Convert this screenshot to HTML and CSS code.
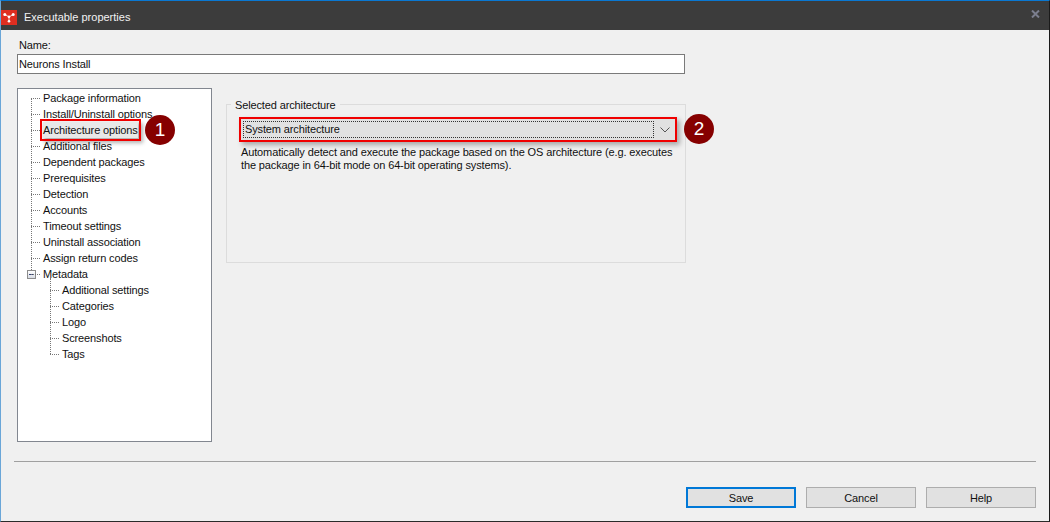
FILE: index.html
```html
<!DOCTYPE html>
<html lang="en">
<head>
<meta charset="utf-8">
<title>Executable properties</title>
<link rel="stylesheet" href="styles.css">
</head>
<body>
<div class="window">
  <header class="titlebar">
    <span class="app-icon">
      <svg width="16" height="15" viewBox="0 0 16 15"><path d="M4 4.500L8 7l4-2.500M8 7v4" stroke="#fff" stroke-width=".8" fill="none"/><circle cx="3.800" cy="4.500" r="1.500" fill="#fff"/><circle cx="12.200" cy="4.500" r="1.500" fill="#fff"/><circle cx="8" cy="6.800" r="1.300" fill="#fff"/><circle cx="8" cy="11.200" r="1.300" fill="#fff"/></svg>
    </span>
    <span class="title">Executable properties</span>
    <svg class="close" width="9" height="8" viewBox="0 0 9 8"><path d="M1 .5l7 7M8 .5l-7 7" stroke="#7b7e8e" stroke-width="2"/></svg>
  </header>
  <main class="content">
    <label class="name-label">Name:</label>
    <div class="name-input">Neurons Install</div>
    <div class="columns">
      <nav class="tree">
        <ul class="branch root">
          <li class="node"><i class="tick"></i><span>Package information</span></li>
          <li class="node"><i class="tick"></i><span>Install/Uninstall options</span></li>
          <li class="node"><i class="tick"></i><span class="marked">Architecture options</span><b class="badge badge-one">1</b></li>
          <li class="node"><i class="tick"></i><span>Additional files</span></li>
          <li class="node"><i class="tick"></i><span>Dependent packages</span></li>
          <li class="node"><i class="tick"></i><span>Prerequisites</span></li>
          <li class="node"><i class="tick"></i><span>Detection</span></li>
          <li class="node"><i class="tick"></i><span>Accounts</span></li>
          <li class="node"><i class="tick"></i><span>Timeout settings</span></li>
          <li class="node"><i class="tick"></i><span>Uninstall association</span></li>
          <li class="node"><i class="tick"></i><span>Assign return codes</span></li>
        </ul>
        <div class="node parent"><i class="expander"></i><i class="tick"></i><span>Metadata</span></div>
        <ul class="branch sub">
          <li class="node"><i class="tick"></i><span>Additional settings</span></li>
          <li class="node"><i class="tick"></i><span>Categories</span></li>
          <li class="node"><i class="tick"></i><span>Logo</span></li>
          <li class="node"><i class="tick"></i><span>Screenshots</span></li>
          <li class="node"><i class="tick"></i><span>Tags</span></li>
        </ul>
      </nav>
      <section class="group">
        <span class="legend">Selected architecture</span>
        <div class="combo">
          <span class="combo-value"><span>System architecture</span></span>
          <svg class="chevron" width="10" height="6" viewBox="0 0 10 6"><path d="M.5.5L5 5 9.500.5" stroke="#555" fill="none"/></svg>
          <b class="badge badge-two">2</b>
        </div>
        <p class="help">Automatically detect and execute the package based on the OS architecture (e.g. executes the package in 64-bit mode on 64-bit operating systems).</p>
      </section>
    </div>
    <div class="footer">
      <button class="btn primary">Save</button>
      <button class="btn">Cancel</button>
      <button class="btn">Help</button>
    </div>
  </main>
</div>
</body>
</html>
```
FILE: styles.css
```css
* { box-sizing: border-box; }
html, body { margin: 0; padding: 0; }
body {
  width: 1050px;
  height: 522px;
  overflow: hidden;
  font-family: "Liberation Sans", Arial, sans-serif;
  font-size: 11px;
  letter-spacing: -.13px;
  color: #111;
  background: #f0f0f0;
}
.window {
  width: 1050px;
  height: 522px;
  display: flex;
  flex-direction: column;
  border-top: 1px solid #0a78d2;
  border-left: 1px solid #6aa6d8;
  border-right: 1px solid #1a1a1a;
  border-bottom: 1px solid #2a2a2a;
}
.titlebar {
  height: 29px;
  flex: none;
  display: flex;
  align-items: center;
  background: #3c3c3c;
  color: #f2f2f2;
  padding-right: 9px;
  padding-top: 3px;
}
.app-icon {
  width: 16px;
  height: 15px;
  background: #df2e20;
  display: flex;
}
.title { margin-left: 7px; flex: 1; letter-spacing: 0; }
.close { margin-top: -6px; }
.content {
  flex: 1;
  display: flex;
  flex-direction: column;
  padding: 8px 13px 0 16px;
}
.name-label { height: 16px; margin-left: 2px; line-height: 15px; }
.name-input {
  width: 668px;
  height: 20px;
  background: #fff;
  border: 1px solid #7a7a7a;
  line-height: 18px;
  padding-left: 1px;
}
.columns { display: flex; margin-top: 14px; height: 354px; }
.tree {
  width: 195px;
  height: 354px;
  background: #fff;
  border: 1px solid #828790;
  padding-top: 1px;
}
.branch { list-style: none; margin: 0; padding: 0; position: relative; }
.branch::before {
  content: "";
  position: absolute;
  border-left: 1px dotted #777;
  top: 8px;
}
.root { padding-left: 25px; }
.root::before { left: 13px; bottom: -4px; }
.sub { padding-left: 44px; }
.sub::before { left: 32px; top: -4px; bottom: 8px; }
.node {
  height: 16px;
  line-height: 16px;
  display: flex;
  align-items: center;
  white-space: nowrap;
  position: relative;
}
.tick {
  position: absolute;
  margin-left: -12px;
  width: 9px;
  border-top: 1px dotted #777;
}
.parent { padding-left: 25px; }
.expander {
  position: absolute;
  left: 9px;
  top: 4px;
  width: 9px;
  height: 9px;
  border: 1px solid #8c8c8c;
  background: linear-gradient(#fff, #d8dce4);
}
.expander::after {
  content: "";
  position: absolute;
  left: 1px;
  top: 3px;
  width: 5px;
  height: 1px;
  background: #33427a;
}
.marked {
  outline: 2px solid #f00000;
  outline-offset: 1px;
  box-shadow: 3px 3px 4px 2px rgba(0, 0, 0, .3);
  background: #e8e8e8;
}
.badge {
  position: absolute;
  width: 30px;
  height: 30px;
  border-radius: 50%;
  background: #860000;
  color: #fff;
  font-size: 19px;
  font-weight: 400;
  line-height: 30px;
  text-align: center;
}
.badge-one { left: 102px; top: -7px; }
.badge-two { left: 443px; top: -5px; }
.group {
  width: 460px;
  height: 159px;
  margin: 16px 0 0 14px;
  border: 1px solid #dcdcdc;
  padding: 14px 10px 0 14px;
  position: relative;
}
.legend {
  position: absolute;
  left: 4px;
  top: -7px;
  padding: 0 4px;
  background: #f0f0f0;
  line-height: 14px;
}
.combo {
  width: 434px;
  height: 21px;
  background: #e1e1e1;
  display: flex;
  align-items: center;
  position: relative;
  outline: 2px solid #f00000;
  outline-offset: 0;
  box-shadow: 3px 3px 5px 2px rgba(0, 0, 0, .3);
  padding: 2px 21px 2px 2px;
}
.combo-value {
  flex: 1;
  height: 100%;
  border: 1px dotted #333;
  line-height: 15px;
  padding-left: 1px;
}
.chevron { position: absolute; right: 5px; top: 8px; }
.help { margin: 6px 0 0; line-height: 13px; width: 440px; }
.footer {
  margin-top: 19px;
  border-top: 1px solid #a0a0a0;
  padding-top: 25px;
  margin-left: -3px;
  display: flex;
  justify-content: flex-end;
  gap: 10px;
}
.btn {
  width: 110px;
  height: 21px;
  padding: 0;
  font: inherit;
  letter-spacing: inherit;
  color: #111;
  background: #e1e1e1;
  border: 1px solid #adadad;
}
.primary { border: 2px solid #0078d7; }
```
